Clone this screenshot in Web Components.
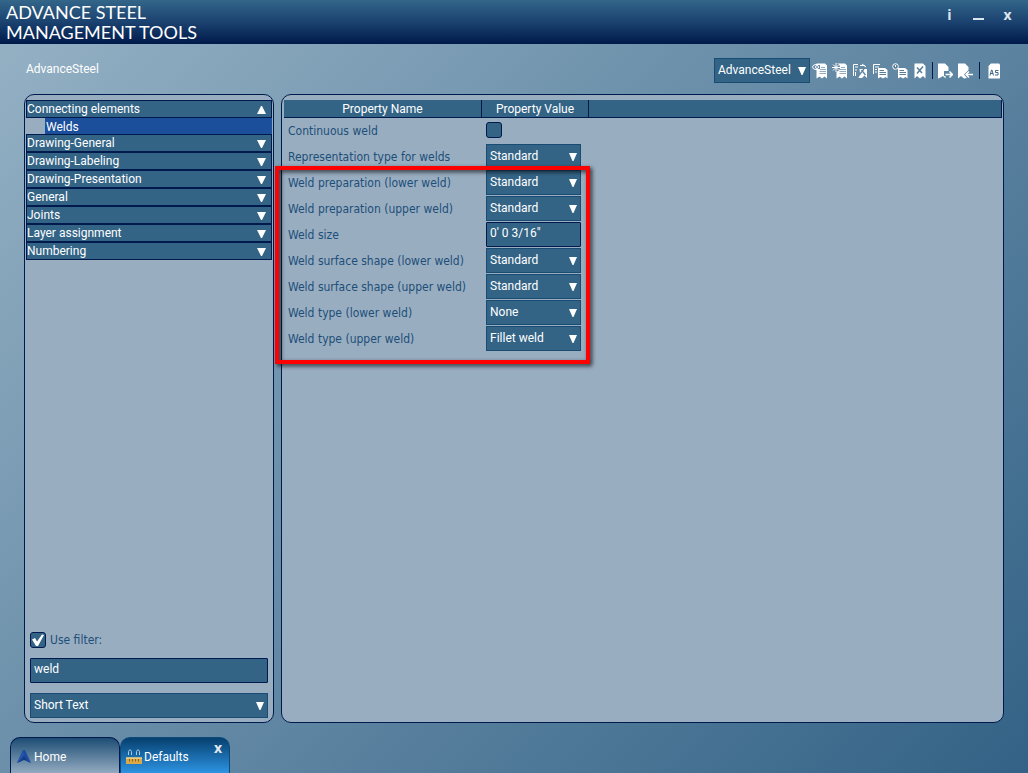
<!DOCTYPE html>
<html lang="en">
<head>
<meta charset="utf-8">
<title>Advance Steel Management Tools</title>
<style>
html, body { margin: 0; height: 100%; }
body {
  --ink: #001a4d;
  --fill: #336486;
  --edge: #1a4b73;
  --panel: #99adc1;
  --label: #1c4f78;
  font: 12px/16px Roboto, "Open Sans", sans-serif;
  color: #fff;
}
</style>
</head>
<body>
<app-window></app-window>

<script>
const define = (name, html, setup) => {
  const template = document.createElement('template');
  template.innerHTML = html;
  customElements.define(name, class extends HTMLElement {
    constructor() {
      super();
      this.attachShadow({ mode: 'open' }).append(template.content.cloneNode(true));
    }
    connectedCallback() { if (setup) setup(this, this.shadowRoot); }
  });
};

/* Drop-down with a triangle marker */
define('drop-down', `
<style>
:host { display: block; }
.box { display: grid; grid-template-columns: 1fr 20px; align-items: center; }
select {
  grid-area: 1 / 1 / 2 / 3; box-sizing: border-box; width: 100%; height: 25px; margin: 0; padding: 0 16px 1px 3px;
  appearance: none; border: 1px solid var(--edge); border-radius: 0; background: var(--fill);
  font: inherit; color: inherit;
}
svg { grid-area: 1 / 2; width: 8px; height: 8px; justify-self: end; margin-right: 4px; pointer-events: none; z-index: 1; }
</style>
<div class="box"><select></select><svg viewBox="0 0 8 8"><path d="M0 0h8L4.500 8h-1z" fill="#fff"/></svg></div>`,
(host, root) => {
  const select = root.querySelector('select');
  select.setAttribute('aria-label', host.getAttribute('label'));
  select.replaceChildren(...host.getAttribute('options').split('|').map(t => new Option(t)));
});

/* Text box */
define('text-box', `
<style>
:host { display: block; }
input {
  display: block; box-sizing: border-box; width: 100%; height: 25px; margin: 0; padding: 0 3px 3px;
  border: 1px solid var(--ink); border-radius: 1px; background: var(--fill); font: inherit; color: inherit;
}
</style>
<input type="text">`,
(host, root) => {
  const input = root.querySelector('input');
  input.value = host.getAttribute('value');
  input.setAttribute('aria-label', host.getAttribute('label'));
});

/* Tick box, with its label text slotted */
define('tick-box', `
<style>
:host { display: block; }
label { display: flex; align-items: center; gap: 4px; color: var(--label); font-family: "DejaVu Sans Condensed", "DejaVu Sans", sans-serif; }
.box { display: grid; }
.box > * { grid-area: 1 / 1; }
input { appearance: none; box-sizing: border-box; width: 16px; height: 16px; margin: 0; border: 1px solid var(--ink); border-radius: 3px; background: var(--fill); }
svg { width: 16px; height: 16px; visibility: hidden; pointer-events: none; }
input:checked + svg { visibility: visible; }
</style>
<label><span class="box"><input type="checkbox"><svg viewBox="0 0 16 16"><path d="M2 7.500 5 6l2 3.500L12 2.500l2 .5L8 14H6z" fill="#fff"/></svg></span><slot></slot></label>`,
(host, root) => {
  const input = root.querySelector('input');
  input.checked = host.hasAttribute('checked');
  if (host.hasAttribute('label')) input.setAttribute('aria-label', host.getAttribute('label'));
});

/* Title bar */
define('title-bar', `
<style>
:host { display: flex; justify-content: space-between; align-items: flex-start; height: 44px; background: linear-gradient(#336689, #1b4270 50%, #001a4a); }
h1 { margin: 2px 0 0 6px; font: 18px/20px Lato, "Open Sans", sans-serif; }
nav { display: flex; gap: 12px; margin: 6px 12px 0 0; }
button { display: grid; place-items: center; width: 17px; height: 17px; padding: 0; border: 0; background: none; color: #dde5ec; font: bold 14px/16px "Open Sans", sans-serif; }
.bar { width: 11px; height: 2px; margin-top: 8px; background: #dde5ec; }
</style>
<h1>ADVANCE STEEL<br>MANAGEMENT TOOLS</h1>
<nav><button type="button">i</button><button type="button" aria-label="Minimize"><span class="bar"></span></button><button type="button">x</button></nav>`);

/* Toolbar */
define('tool-bar', `
<style>
:host { display: flex; justify-content: space-between; align-items: center; height: 50px; padding: 0 24px 0 26px; }
.tools { display: flex; align-items: center; padding-top: 3px; }
drop-down { width: 96px; }
button { display: block; padding: 0 2px; border: 0; background: none; }
button svg { display: block; width: 16px; height: 16px; }
i { width: 1px; height: 17px; margin: 0 2px; background: var(--ink); }
i:last-of-type { margin: 0 4px; }
</style>
<svg width="0" height="0" style="position:absolute"><defs>
<g id="page" fill="#fff"><path d="M4.500 .5h8.500l2 2v13l-2.500-2-2.500 2-2.500-2-3 2z"/><path d="M9 4.500h4M8 6.500h6M7.500 8.500h6.500M7.500 10.500h6.500" stroke="#6487a2" stroke-width=".7"/></g>
<g id="small" fill="#fff"><path d="M6 5h7l2.500 2v8.500l-2-1.500-2.500 1.500L8.500 14 6 15.500z"/><path d="M7.500 7.500h4.500M7.500 9.500h6.500M7.500 11.500h6.500" stroke="#587d9a"/></g>
</defs></svg>
<span>AdvanceSteel</span>
<div class="tools">
<drop-down label="Database" options="AdvanceSteel"></drop-down>
<button type="button" aria-label="View"><svg viewBox="0 0 16 16"><use href="#page"/><path d="M0 4Q1 1 4 1h4v6H4Q1 7 0 4z" fill="#6487a2"/><path d="M.5 4Q1 1.500 4 1.500h4M.5 4Q1 6.500 4 6.500h4" fill="none" stroke="#fff"/><circle cx="5" cy="4" r="1.500" fill="none" stroke="#fff"/></svg></button>
<button type="button" aria-label="New"><svg viewBox="0 0 16 16"><use href="#page"/><circle cx="4" cy="4.500" r="4" fill="#6487a2"/><path d="M4 0v9M0 4.500h8M1 1.500l6 6M7 1.500l-6 6" stroke="#fff"/></svg></button>
<button type="button" aria-label="Replace"><svg viewBox="0 0 16 16" fill="none" stroke="#fff"><path d="M1.500 13V1.500H6M3 4h3M3 7h2M3.500 9v4M8 2.500h5M10 1l4 3" /><path d="M7.500 6H15v9l-2.500-2.500L10 15H6.500L8 10z" fill="#fff" stroke="none"/><path d="M6 13.500 12 6M9.500 7l4 5" stroke="#5f839f" stroke-width="1.300"/></svg></button>
<button type="button" aria-label="Copy"><svg viewBox="0 0 16 16"><path d="M1.500 11V1.500H8M3 4h4M3 6.500h2M3 9h2" fill="none" stroke="#fff"/><use href="#small"/></svg></button>
<button type="button" aria-label="History"><svg viewBox="0 0 16 16"><use href="#small"/><circle cx="3.500" cy="3.500" r="2.800" fill="#587d9a" stroke="#fff"/><path d="M3.500 2v2" fill="none" stroke="#fff"/></svg></button>
<button type="button" aria-label="Delete"><svg viewBox="0 0 16 16"><path d="M2.500 .5h8.500l2.500 2.500v12.500L11 13l-3 2.500L5 13l-2.500 2.500z" fill="#fff"/><path d="M5 4.500l5 5.500M11 3.500l-6 7" stroke="#587d9a" stroke-width="1.500"/></svg></button>
<i></i>
<button type="button" aria-label="Export"><svg viewBox="0 0 16 16"><path d="M1 .5h7l3.500 3.500v4H7v5h1.500v2.500L6 13l-2.500 1.500L1 15.500z" fill="#fff"/><path d="M8.500 11.500h6.500M12.500 8.500l3 3-3 3" fill="none" stroke="#fff" stroke-width="1.500"/></svg></button>
<button type="button" aria-label="Import"><svg viewBox="0 0 16 16"><path d="M1 .5h7l3.500 3.500v3L7 11.500l3 3.500-3 .5L4 13l-3 2.500z" fill="#fff"/><path d="M9.500 11.500H16M12 8.500l-3 3 3 3" fill="none" stroke="#fff" stroke-width="1.500"/></svg></button>
<i></i>
<button type="button" aria-label="Advance Steel"><svg viewBox="0 0 16 16"><path d="M5 .5h8l1 1v14H2.500V3z" fill="#fff"/><path d="M4 12.500 5.500 7h.5l1.500 5.500M4.500 10.500H7M12.500 7.500H9.500v2h2.500v2.500H9" fill="none" stroke="#41698b"/></svg></button>
</div>`);

/* One category of the tree */
define('tree-group', `
<style>
:host { display: block; }
button {
  display: flex; box-sizing: border-box; width: 100%; height: 18px; justify-content: space-between; align-items: center; padding: 1px 5px 0 0;
  border: 1px solid var(--ink); background: var(--fill); color: inherit; font: inherit; line-height: 17px; text-align: left;
}
svg { width: 9px; height: 8px; }
:host([open]) svg { transform: rotate(180deg); }
</style>
<button type="button"><slot name="name"></slot><svg viewBox="0 0 9 8"><path d="M0 0h9L5 8H4z" fill="#fff"/></svg></button><slot></slot>`);

/* Left panel */
define('category-panel', `
<style>
:host { display: flex; flex-direction: column; box-sizing: border-box; width: 250px; padding: 5px 1px 4px; border: 1px solid var(--ink); border-radius: 10px; background: var(--panel); }
.item { display: block; height: 16px; margin-left: 19px; padding-left: 1px; background: #1b4f9c; color: #fff; line-height: 18px; text-decoration: none; }
form { display: grid; gap: 10px; margin: auto 4px 0; }
</style>
<div>
<tree-group open><span slot="name">Connecting elements</span><a class="item" href="#welds">Welds</a></tree-group>
<tree-group><span slot="name">Drawing-General</span></tree-group>
<tree-group><span slot="name">Drawing-Labeling</span></tree-group>
<tree-group><span slot="name">Drawing-Presentation</span></tree-group>
<tree-group><span slot="name">General</span></tree-group>
<tree-group><span slot="name">Joints</span></tree-group>
<tree-group><span slot="name">Layer assignment</span></tree-group>
<tree-group><span slot="name">Numbering</span></tree-group>
</div>
<form>
<tick-box checked>Use filter:</tick-box>
<text-box label="Filter" value="weld"></text-box>
<drop-down label="Search in" options="Short Text"></drop-down>
</form>`);

/* Right panel */
define('property-panel', `
<style>
:host { display: block; position: relative; box-sizing: border-box; padding: 5px 1px 5px 2px; border: 1px solid var(--ink); border-radius: 10px; background: var(--panel); }
table { width: 100%; table-layout: fixed; border-collapse: separate; border-spacing: 0; }
th, td { padding: 0; text-align: left; font-weight: normal; }
thead th { box-sizing: border-box; height: 18px; border: solid var(--ink); border-width: 0 1px 1px 0; background: var(--fill); text-align: center; }
tbody th { height: 26px; padding-left: 4px; color: var(--label); font-family: "DejaVu Sans Condensed", "DejaVu Sans", sans-serif; }
td { padding-left: 4px; vertical-align: top; }
td > * { width: 95px; }
td > tick-box { margin-top: 4px; }
.mark { position: absolute; left: -7px; top: 71px; box-sizing: border-box; width: 315px; height: 198px; border: 4px solid #f00; filter: drop-shadow(2px 2px 2px #000b); pointer-events: none; }
</style>
<table>
<colgroup><col style="width:198px"><col style="width:107px"><col></colgroup>
<thead><tr><th>Property Name</th><th>Property Value</th><th></th></tr></thead>
<tbody>
<tr><th>Continuous weld</th><td><tick-box label="Continuous weld"></tick-box></td></tr>
<tr><th>Representation type for welds</th><td><drop-down label="Representation type for welds" options="Standard"></drop-down></td></tr>
<tr><th>Weld preparation (lower weld)</th><td><drop-down label="Weld preparation (lower weld)" options="Standard"></drop-down></td></tr>
<tr><th>Weld preparation (upper weld)</th><td><drop-down label="Weld preparation (upper weld)" options="Standard"></drop-down></td></tr>
<tr><th>Weld size</th><td><text-box label="Weld size" value="0' 0 3/16&quot;"></text-box></td></tr>
<tr><th>Weld surface shape (lower weld)</th><td><drop-down label="Weld surface shape (lower weld)" options="Standard"></drop-down></td></tr>
<tr><th>Weld surface shape (upper weld)</th><td><drop-down label="Weld surface shape (upper weld)" options="Standard"></drop-down></td></tr>
<tr><th>Weld type (lower weld)</th><td><drop-down label="Weld type (lower weld)" options="None"></drop-down></td></tr>
<tr><th>Weld type (upper weld)</th><td><drop-down label="Weld type (upper weld)" options="Fillet weld"></drop-down></td></tr>
</tbody>
</table>
<div class="mark"></div>`);

/* A tab of the bottom strip: icon and name slotted */
define('page-tab', `
<style>
:host { display: flex; box-sizing: border-box; width: 110px; height: 36px; border: 1px solid var(--ink); border-bottom: 0; border-radius: 10px 10px 0 0; background: linear-gradient(#1d4d74, #93aac0); }
:host([active]) { border-color: #0d4a7c; background: linear-gradient(#06406f, #2d93e2); }
button { display: flex; flex: 1; align-items: center; gap: 2px; margin: 0; padding: 3px 0 0 5px; border: 0; background: none; color: inherit; font: inherit; }
.close { display: none; }
:host([active]) .close { display: block; flex: none; align-self: flex-start; padding: 2px 7px 0 0; font: bold 14px/16px "Open Sans", sans-serif; color: #e3e9ee; }
</style>
<button type="button"><slot name="icon"></slot><slot></slot></button><button type="button" class="close">x</button>`);

define('app-window', `
<style>
:host { display: flex; flex-direction: column; min-height: 100vh; background: linear-gradient(135deg, #96b2c5, #336286); }
main { display: grid; flex: 1; grid-template-columns: 250px 1fr; gap: 7px; padding: 0 24px 14px; }
footer { display: flex; padding-left: 10px; }
</style>
<title-bar></title-bar>
<tool-bar></tool-bar>
<main><category-panel></category-panel><property-panel></property-panel></main>
<footer>
<page-tab><svg slot="icon" width="16" height="16" viewBox="0 0 16 16"><path d="M7 1h2l6 13-3-1-3.500-3L4 13l-3 1z" fill="#1d4ba0"/><path d="M7 1 1 14l4-3 3-5z" fill="#2455ad"/><path d="M8 7l4 5.500-4-1.500-5 2z" fill="#173c86"/></svg>Home</page-tab>
<page-tab active><svg slot="icon" width="16" height="16" viewBox="0 0 16 16"><path d="M2.500 6V2.500q1.500-3.500 3 0V6M10.500 6V2.500q1.500-3.500 3 0V6" fill="none" stroke="#a9cbe2"/><path d="M0 8.500h16V15H0z" fill="#dba94a"/><path d="M0 9h16" stroke="#ffe9a8"/><path d="M3.500 10v2.500M6.500 10v2.500M9.500 10v2.500M12.500 10v2.500" stroke="#8c6318"/></svg>Defaults</page-tab>
</footer>`);
</script>
</body>
</html>
